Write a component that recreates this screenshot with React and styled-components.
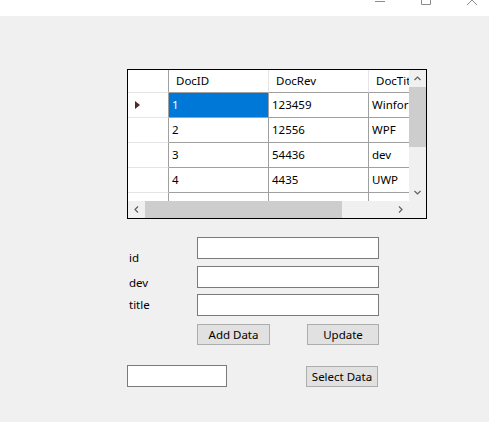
import React from 'react';
import styled, { createGlobalStyle } from 'styled-components';

const COLUMNS = ['DocID', 'DocRev', 'DocTitle'];
const ROWS = [
  ['1', '123459', 'Winforms'],
  ['2', '12556', 'WPF'],
  ['3', '54436', 'dev'],
  ['4', '4435', 'UWP'],
  ['', '', ''],
];

function Chevron({ dir }) {
  const points = {
    up: '0.5,4 3.5,1 6.5,4',
    down: '0.5,1 3.5,4 6.5,1',
    left: '4,0.5 1,3.5 4,6.5',
    right: '1,0.5 4,3.5 1,6.5',
  }[dir];
  const vertical = dir === 'up' || dir === 'down';
  return (
    <svg width={vertical ? 7 : 5} height={vertical ? 5 : 7}>
      <polyline points={points} fill="none" stroke="#606060" strokeWidth="1.2" />
    </svg>
  );
}

function App() {
  return (
    <Window>
      <GlobalStyle />
      <TitleBar>
        <CaptionGroup>
          <CaptionButton>
            <svg width="10" height="6">
              <line x1="0" y1="1.5" x2="10" y2="1.5" stroke="#8c8c8c" />
            </svg>
          </CaptionButton>
          <CaptionButton>
            <svg width="10" height="6">
              <path d="M0.5 0 V4.5 H9.5 V0" fill="none" stroke="#8c8c8c" />
            </svg>
          </CaptionButton>
          <CaptionButton>
            <svg width="10" height="6">
              <path d="M5 0 L0 5 M5 0 L10 5" fill="none" stroke="#8c8c8c" />
            </svg>
          </CaptionButton>
        </CaptionGroup>
      </TitleBar>
      <Content>
        <GridBox>
          <Viewport>
            <Row header>
              <RowHeaderCell header />
              {COLUMNS.map(name => (
                <HeaderCell key={name}>{name}</HeaderCell>
              ))}
            </Row>
            {ROWS.map((row, r) => (
              <Row key={r}>
                <RowHeaderCell>
                  {r === 0 && (
                    <svg width="5" height="8">
                      <polygon points="0,0 5,4 0,8" fill="#4d2c1e" />
                    </svg>
                  )}
                </RowHeaderCell>
                {row.map((value, c) => (
                  <DataCell key={c} selected={r === 0 && c === 0}>
                    {value}
                  </DataCell>
                ))}
              </Row>
            ))}
          </Viewport>
          <VScroll>
            <ArrowBox>
              <Chevron dir="up" />
            </ArrowBox>
            <VThumb />
            <Track />
            <ArrowBox>
              <Chevron dir="down" />
            </ArrowBox>
          </VScroll>
          <HScroll>
            <ArrowBox>
              <Chevron dir="left" />
            </ArrowBox>
            <HThumb />
            <Track />
            <ArrowBox>
              <Chevron dir="right" />
            </ArrowBox>
          </HScroll>
          <Corner />
        </GridBox>

        <Form>
          <LabelColumn>
            <Label offset={13}>id</Label>
            <Label offset={9}>dev</Label>
            <Label offset={5.5}>title</Label>
          </LabelColumn>
          <InputColumn>
            <TextBox width={182} />
            <TextBox width={182} />
            <TextBox width={182} />
            <ButtonRow>
              <Button width={73}>Add Data</Button>
              <Button width={72}>Update</Button>
            </ButtonRow>
          </InputColumn>
        </Form>

        <SearchRow>
          <TextBox width={100} />
          <SelectButton width={72}>Select Data</SelectButton>
        </SearchRow>
      </Content>
    </Window>
  );
}
export default App;

const GlobalStyle = createGlobalStyle`
  html, body {
    margin: 0;
    padding: 0;
  }
  body {
    background: #f0f0f0;
    font-family: 'Segoe UI', 'Noto Sans', sans-serif;
    font-size: 11.5px;
    color: #000;
  }
  * {
    box-sizing: border-box;
  }
`;
const Window = styled.div`
  width: 489px;
  height: 422px;
  display: flex;
  flex-direction: column;
  overflow: hidden;
  background: #f0f0f0;
`;
const TitleBar = styled.div`
  height: 16px;
  flex: none;
  background: #fff;
  display: flex;
  justify-content: flex-end;
  overflow: hidden;
`;
const CaptionGroup = styled.div`
  display: flex;
  margin-right: -6px;
`;
const CaptionButton = styled.div`
  width: 46px;
  height: 16px;
  display: flex;
  justify-content: center;
  align-items: flex-start;
  & svg {
    display: block;
  }
`;
const Content = styled.div`
  padding: 53px 0 0 127px;
`;
const GridBox = styled.div`
  width: 300px;
  height: 150px;
  border: 1px solid #000;
  background: #fff;
  display: grid;
  grid-template-columns: 281px 17px;
  grid-template-rows: 131px 17px;
`;
const Viewport = styled.div`
  overflow: hidden;
  background: #fff;
`;
const Row = styled.div`
  display: flex;
  height: ${props => (props.header ? 23 : 25)}px;
`;
const BaseCell = styled.div`
  flex: none;
  display: flex;
  align-items: center;
  white-space: nowrap;
  line-height: 16px;
`;
const RowHeaderCell = styled(BaseCell)`
  width: 41px;
  padding-left: 7px;
  background: #fff;
  border-right: 1px solid #a0a0a0;
  border-bottom: 1px solid #e5e5e5;
`;
const HeaderCell = styled(BaseCell)`
  width: 100px;
  padding-left: 7px;
  background: #fff;
  border-right: 1px solid #e5e5e5;
  border-bottom: 1px solid #a0a0a0;
`;
const DataCell = styled(BaseCell)`
  width: 100px;
  padding-left: 3px;
  border-right: 1px solid #a0a0a0;
  border-bottom: 1px solid #a0a0a0;
  background: ${props => (props.selected ? '#0078d7' : '#fff')};
  color: ${props => (props.selected ? '#fff' : '#000')};
`;
const VScroll = styled.div`
  background: #f0f0f0;
  display: flex;
  flex-direction: column;
`;
const HScroll = styled.div`
  background: #f0f0f0;
  display: flex;
`;
const ArrowBox = styled.div`
  width: 17px;
  height: 17px;
  flex: none;
  display: flex;
  align-items: center;
  justify-content: center;
  & svg {
    display: block;
  }
`;
const VThumb = styled.div`
  height: 60px;
  flex: none;
  background: #cdcdcd;
`;
const HThumb = styled.div`
  width: 197px;
  flex: none;
  background: #cdcdcd;
`;
const Track = styled.div`
  flex: 1;
`;
const Corner = styled.div`
  background: #f0f0f0;
`;
const Form = styled.div`
  display: flex;
  margin-top: 18px;
`;
const LabelColumn = styled.div`
  width: 70px;
  padding-left: 2px;
  display: flex;
  flex-direction: column;
`;
const Label = styled.span`
  margin-top: ${props => props.offset}px;
  line-height: 16px;
`;
const InputColumn = styled.div`
  width: 182px;
  display: flex;
  flex-direction: column;
  gap: 6.5px;
`;
const TextBox = styled.div`
  width: ${props => props.width}px;
  height: 22px;
  flex: none;
  background: #fff;
  border: 1px solid #7a7a7a;
`;
const ButtonRow = styled.div`
  display: flex;
  justify-content: space-between;
  margin-top: 1.5px;
`;
const Button = styled.div`
  width: ${props => props.width}px;
  height: 21px;
  background: #e1e1e1;
  border: 1px solid #adadad;
  display: flex;
  align-items: center;
  justify-content: center;
  line-height: 16px;
`;
const SelectButton = styled(Button)`
  margin: 1px 0 0 79px;
`;
const SearchRow = styled.div`
  display: flex;
  align-items: flex-start;
  margin-top: 20px;
`;
